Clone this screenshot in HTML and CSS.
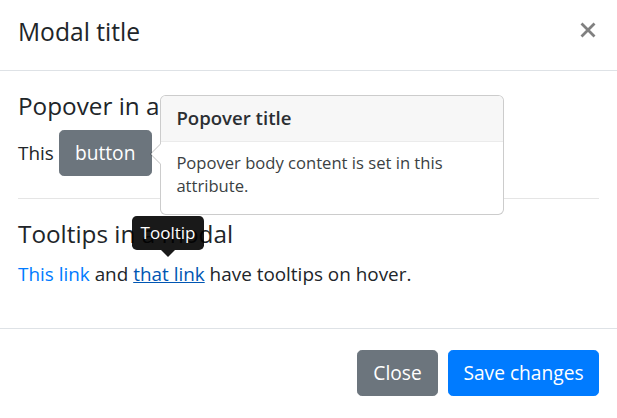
FILE: index.html
```html
<!DOCTYPE html>
<html lang="en">
<head>
<meta charset="utf-8">
<title>Modal</title>
<link rel="stylesheet" href="styles.css">
</head>
<body>
<div class="modal">
  <div class="modal-header">
    <h5 class="modal-title">Modal title</h5>
    <button class="close" type="button" aria-label="Close">
      <svg width="16" height="16" viewBox="0 0 16 16"><path d="M1.5 1.5 L14.5 14.5 M14.5 1.5 L1.5 14.5" stroke="#808080" stroke-width="2.8" stroke-linecap="butt"/></svg>
    </button>
  </div>
  <div class="modal-body">
    <h5 class="section-title first">Popover in a modal</h5>
    <p class="line-btn">This <a class="btn btn-secondary btn-inline">button</a> triggers a popover on click.</p>
    <hr class="divider">
    <h5 class="section-title">Tooltips in a modal</h5>
    <p class="line-links"><a class="link">This link</a> and <a class="link link-hover">that link</a> have tooltips on hover.</p>
  </div>
  <div class="modal-footer">
    <button class="btn btn-secondary btn-close-modal" type="button">Close</button>
    <button class="btn btn-primary btn-save" type="button">Save changes</button>
  </div>

  <div class="popover">
    <div class="popover-arrow"></div>
    <h3 class="popover-header">Popover title</h3>
    <div class="popover-body">Popover body content is set in this attribute.</div>
  </div>

  <div class="tooltip">
    <div class="tooltip-inner">Tooltip</div>
    <div class="tooltip-arrow"></div>
  </div>
</div>
</body>
</html>
```

FILE: styles.css
```css
* { box-sizing: border-box; }

html, body {
  margin: 0;
  padding: 0;
  background: #fff;
}

body {
  font-family: "Open Sans", "Noto Sans", sans-serif;
  color: #212529;
  font-size: 18.9px;
  line-height: 28.8px;
}

.modal {
  position: relative;
  width: 617px;
  height: 418px;
  overflow: hidden;
}

.modal-header {
  display: flex;
  justify-content: space-between;
  align-items: flex-start;
  height: 71px;
  padding: 14px 21px 0 18px;
  border-bottom: 1px solid #dee2e6;
}

.modal-title {
  margin: 0;
  font-size: 24.6px;
  font-weight: 500;
  line-height: 36px;
}

.close {
  border: 0;
  background: none;
  padding: 0;
  margin-top: 8px;
  width: 16px;
  height: 16px;
  display: flex;
}

.modal-body {
  padding: 17px 18px 0 18px;
  height: 258px;
  border-bottom: 1px solid #dee2e6;
}

.section-title {
  margin: 0;
  font-size: 24.3px;
  font-weight: 500;
  line-height: 36px;
}

.section-title.first {
  margin-bottom: 6px;
}

.line-btn {
  margin: 0 0 22px 0;
}

.btn {
  display: inline-block;
  font-family: inherit;
  font-size: 19.2px;
  line-height: 28.8px;
  font-weight: 400;
  color: #fff;
  border: 1px solid transparent;
  border-radius: 4.8px;
  padding: 7.6px 14.4px;
  text-align: center;
  vertical-align: baseline;
}

.btn-inline {
  width: 93px;
  padding-left: 0;
  padding-right: 0;
}

.btn-secondary {
  background: #6c757d;
  border-color: #6c757d;
}

.btn-primary {
  background: #007bff;
  border-color: #007bff;
}

.divider {
  margin: 0 0 17px 0;
  border: 0;
  border-top: 1px solid #e5e5e5;
}

.line-links {
  margin: 8px 0 0 0;
}

.link {
  color: #007bff;
  text-decoration: none;
}

.link-hover {
  color: #0056b3;
  text-decoration: underline;
}

.modal-footer {
  display: flex;
  justify-content: flex-end;
  align-items: flex-start;
  gap: 10px;
  padding: 21px 18px 0 18px;
}

.btn-close-modal {
  width: 81px;
  height: 46px;
  padding-left: 0;
  padding-right: 0;
}

.btn-save {
  width: 151px;
  height: 46px;
  padding-left: 0;
  padding-right: 0;
}

/* Popover */
.popover {
  position: absolute;
  left: 160px;
  top: 95px;
  width: 344px;
  height: 120px;
  background: #fff;
  border: 1px solid rgba(0, 0, 0, 0.2);
  border-radius: 5.76px;
}

.popover-arrow {
  position: absolute;
  left: -11px;
  top: 48px;
  width: 0;
  height: 0;
  border-top: 10px solid transparent;
  border-bottom: 10px solid transparent;
  border-right: 10px solid rgba(0, 0, 0, 0.25);
}

.popover-arrow::after {
  content: "";
  position: absolute;
  left: 1px;
  top: -10px;
  width: 0;
  height: 0;
  border-top: 10px solid transparent;
  border-bottom: 10px solid transparent;
  border-right: 10px solid #fff;
}

.popover-header {
  margin: 0;
  height: 46px;
  padding: 10px 14.4px 0 15.4px;
  font-size: 18.6px;
  font-weight: 600;
  line-height: 23px;
  background: #f7f7f7;
  border-bottom: 1px solid #ebebeb;
  border-top-left-radius: 4.8px;
  border-top-right-radius: 4.8px;
  color: #2b2f33;
}

.popover-body {
  padding: 9px 14.4px 0 15.4px;
  font-size: 16.6px;
  line-height: 23px;
  color: #3b3f43;
}

/* Tooltip */
.tooltip {
  position: absolute;
  left: 132px;
  top: 216px;
  display: flex;
  flex-direction: column;
  align-items: center;
}

.tooltip-inner {
  width: 72px;
  height: 34px;
  background: rgba(0, 0, 0, 0.9);
  color: #fff;
  border-radius: 4.8px;
  font-size: 17px;
  line-height: 34px;
  text-align: center;
}

.tooltip-arrow {
  width: 0;
  height: 0;
  border-left: 7.7px solid transparent;
  border-right: 7.7px solid transparent;
  border-top: 7.7px solid rgba(0, 0, 0, 0.9);
}
```
